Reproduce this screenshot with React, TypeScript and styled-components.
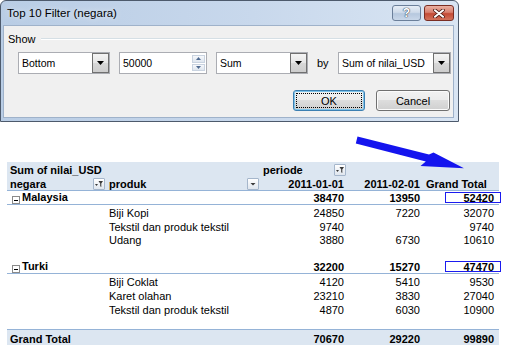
import React from 'react';
import styled, { createGlobalStyle } from 'styled-components';

const GlobalStyle = createGlobalStyle`
  html, body {
    margin: 0;
    padding: 0;
    background: #ffffff;
  }
  body {
    width: 505px;
    height: 353px;
    overflow: hidden;
    font-family: "Liberation Sans", Arial, sans-serif;
  }
`;

const Page = styled.div`
  position: relative;
  width: 505px;
  height: 353px;
`;

/* ---------- dialog ---------- */

const Window = styled.div`
  width: 459px;
  height: 122px;
  box-sizing: border-box;
  border: 1px solid #4d5a6c;
  border-radius: 6px 6px 0 0;
  background: linear-gradient(90deg, #b9cde5 0%, #c8d8ec 55%, #d9e5f3 100%);
  padding: 0 4px 3px 2px;
  display: flex;
  flex-direction: column;
`;

const TitleBar = styled.div`
  height: 24px;
  display: flex;
  align-items: flex-start;
`;

const Title = styled.span`
  align-self: center;
  flex: 1;
  padding-left: 4px;
  font-size: 11.5px;
  color: #000;
  text-shadow: 0 0 6px rgba(255, 255, 255, 0.8);
`;

const CaptionButtons = styled.div`
  display: flex;
  gap: 3px;
  padding-top: 4px;
`;

const CaptionButton = styled.span<{ $close?: boolean }>`
  width: ${p => (p.$close ? 30 : 29)}px;
  height: 16px;
  box-sizing: border-box;
  border: 1px solid ${p => (p.$close ? '#7a2d23' : '#6b7f9a')};
  border-radius: 3px;
  background: ${p =>
    p.$close
      ? 'linear-gradient(#eab0a2, #d8806f 45%, #c44a35 55%, #d2735c)'
      : 'linear-gradient(#e6edf6, #cfdbea 45%, #b6c8de 55%, #c9d7e9)'};
  display: flex;
  align-items: center;
  justify-content: center;
  font-size: 12px;
  font-weight: bold;
  color: #fff;
  text-shadow: 0 0 1px #3c4a5e, 0 0 1px #3c4a5e, 0 0 1px #3c4a5e;
`;

const DialogBody = styled.div`
  flex: 1;
  box-sizing: border-box;
  border: 1px solid #9fb2ca;
  background: #f0f0f0;
  display: flex;
  flex-direction: column;
`;

const GroupHeader = styled.div`
  margin-top: 6px;
  height: 14px;
  display: flex;
  align-items: center;
  padding-left: 4px;
  padding-right: 2px;
  font-size: 11px;
  color: #000;
`;

const GroupLine = styled.span`
  flex: 1;
  margin-left: 5px;
  height: 1px;
  background: #d5dfe5;
  border-bottom: 1px solid #ffffff;
`;

const ControlRow = styled.div`
  margin-top: 6px;
  padding-left: 14px;
  display: flex;
  align-items: center;
  gap: 9px;
`;

const Combo = styled.div<{ $w: number }>`
  width: ${p => p.$w}px;
  height: 22px;
  box-sizing: border-box;
  border: 1px solid #abadb3;
  background: #fff;
  display: flex;
  align-items: stretch;
`;

const ComboText = styled.span`
  flex: 1;
  padding-left: 3px;
  display: flex;
  align-items: center;
  font-size: 10.5px;
  color: #000;
  white-space: nowrap;
`;

const DropButton = styled.span`
  width: 17px;
  box-sizing: border-box;
  border: 1px solid #707070;
  background: linear-gradient(#f4f4f4, #e6e6e6 50%, #d8d8d8 50%, #cdcdcd);
  display: flex;
  align-items: center;
  justify-content: center;
`;

const SpinBox = styled.span`
  width: 13px;
  margin: 2px 1px 2px 0;
  display: flex;
  flex-direction: column;
  gap: 1px;
`;

const SpinHalf = styled.span`
  flex: 1;
  box-sizing: border-box;
  border: 1px solid #c9d3e0;
  background: linear-gradient(#f6f8fb, #dfe6ef);
  display: flex;
  align-items: center;
  justify-content: center;
`;

const ByLabel = styled.span`
  width: 12px;
  font-size: 11px;
  color: #000;
`;

const ButtonRow = styled.div`
  margin-top: 16px;
  padding-right: 3px;
  display: flex;
  justify-content: flex-end;
  gap: 11px;
`;

const DialogButton = styled.button<{ $w: number; $default?: boolean }>`
  width: ${p => p.$w}px;
  height: 21px;
  box-sizing: border-box;
  padding: 0;
  border: 1px solid ${p => (p.$default ? '#3c7fb1' : '#707070')};
  border-radius: 3px;
  background: linear-gradient(#f2f2f2, #ebebeb 50%, #dddddd 50%, #cfcfcf);
  box-shadow: ${p => (p.$default ? 'inset 0 0 0 1px #7ec4ea' : 'inset 0 0 0 1px #fbfbfb')};
  outline: ${p => (p.$default ? '1px dotted #000' : 'none')};
  outline-offset: -4px;
  font-family: "Liberation Sans", Arial, sans-serif;
  font-size: 11px;
  color: #000;
`;

/* ---------- pivot table ---------- */

const Pivot = styled.table`
  margin: 40px 0 0 7px;
  border-collapse: collapse;
  table-layout: fixed;
  width: 492px;
  font-family: "Liberation Sans", Arial, sans-serif;
  font-size: 11px;
  color: #000;
`;

const Col = styled.col<{ $w: number }>`
  width: ${p => p.$w}px;
`;

const Row = styled.tr<{ $h: number; $band?: boolean; $line?: 'top' | 'bottom' }>`
  height: ${p => p.$h}px;
  background: ${p => (p.$band ? '#dce6f1' : 'transparent')};

  & > td {
    border-top: ${p => (p.$line === 'top' ? '1px solid #95b3d7' : 'none')};
    border-bottom: ${p => (p.$line === 'bottom' ? '1px solid #95b3d7' : 'none')};
  }
`;

const Cell = styled.td<{ $right?: boolean; $bold?: boolean; $pr?: number }>`
  padding: 0 ${p => p.$pr ?? 3}px 0 3px;
  line-height: 12px;
  text-align: ${p => (p.$right ? 'right' : 'left')};
  font-weight: ${p => (p.$bold ? 'bold' : 'normal')};
  white-space: nowrap;
  overflow: visible;
  vertical-align: bottom;
`;

const HeadInner = styled.div`
  display: flex;
  align-items: center;
  justify-content: space-between;
`;

const FilterButton = styled.span`
  width: 12px;
  height: 12px;
  box-sizing: border-box;
  border: 1px solid #a5b6cb;
  border-radius: 1px;
  background: linear-gradient(#ffffff, #dfe6ee);
  display: flex;
  align-items: center;
  justify-content: center;
  margin-right: -2px;
`;

const Toggle = styled.span`
  display: inline-flex;
  width: 8px;
  height: 8px;
  box-sizing: border-box;
  border: 1px solid #8a8a8a;
  background: #fff;
  align-items: center;
  justify-content: center;
  margin: 0 2px 0 2px;
  vertical-align: 0;

  &::before {
    content: '';
    width: 4px;
    height: 1px;
    background: #000;
  }
`;

const Value = styled.span`
  position: relative;
  display: inline-block;
`;

const Marked = styled.span`
  position: absolute;
  left: -18px;
  right: -7px;
  top: 0;
  bottom: 1px;
  border: 1px solid #1b1bef;
`;

const Arrow = styled.svg`
  position: absolute;
  left: 350px;
  top: 130px;
  width: 120px;
  height: 45px;
  pointer-events: none;
`;

const Triangle = () => (
  <svg width="7" height="4" viewBox="0 0 7 4">
    <polygon points="0,0 7,0 3.5,4" fill="#000" />
  </svg>
);

const FunnelIcon = () => (
  <svg width="8" height="8" viewBox="0 0 8 8">
    <polygon points="0,4 3,4 1.5,6" fill="#3a3a3a" />
    <polygon points="3.5,1 8,1 6.3,3.6 6.3,7 5.2,6.2 5.2,3.6" fill="#3a3a3a" />
  </svg>
);

const DropIcon = () => (
  <svg width="6" height="4" viewBox="0 0 6 4">
    <polygon points="0.5,1 5.5,1 3,3.5" fill="#3a3a3a" />
  </svg>
);

type Line = {
  name: string;
  vals?: (number | null)[];
  group?: boolean;
  marked?: boolean;
  h: number;
};

const lines: Line[] = [
  { name: 'Malaysia', vals: [38470, 13950, 52420], group: true, marked: true, h: 14 },
  { name: 'Biji Kopi', vals: [24850, 7220, 32070], h: 14 },
  { name: 'Tekstil dan produk tekstil', vals: [9740, null, 9740], h: 14 },
  { name: 'Udang', vals: [3880, 6730, 10610], h: 13 },
  { name: '', h: 14 },
  { name: 'Turki', vals: [32200, 15270, 47470], group: true, marked: true, h: 13 },
  { name: 'Biji Coklat', vals: [4120, 5410, 9530], h: 14 },
  { name: 'Karet olahan', vals: [23210, 3830, 27040], h: 14 },
  { name: 'Tekstil dan produk tekstil', vals: [4870, 6030, 10900], h: 14 },
  { name: '', h: 14 },
];

function App() {
  return (
    <Page>
      <GlobalStyle />
      <Window>
        <TitleBar>
          <Title>Top 10 Filter (negara)</Title>
          <CaptionButtons>
            <CaptionButton>?</CaptionButton>
            <CaptionButton $close>
              <svg width="12" height="9" viewBox="0 0 12 9">
                <path d="M2 1.2 L10 7.8 M10 1.2 L2 7.8" stroke="#4b1b14" strokeWidth="3.6" strokeLinecap="round" />
                <path d="M2 1.2 L10 7.8 M10 1.2 L2 7.8" stroke="#ffffff" strokeWidth="2" strokeLinecap="round" />
              </svg>
            </CaptionButton>
          </CaptionButtons>
        </TitleBar>
        <DialogBody>
          <GroupHeader>
            Show
            <GroupLine />
          </GroupHeader>
          <ControlRow>
            <Combo $w={92}>
              <ComboText>Bottom</ComboText>
              <DropButton>
                <Triangle />
              </DropButton>
            </Combo>
            <Combo $w={88}>
              <ComboText>50000</ComboText>
              <SpinBox>
                <SpinHalf>
                  <svg width="5" height="3" viewBox="0 0 5 3">
                    <polygon points="2.5,0 5,3 0,3" fill="#4f6a90" />
                  </svg>
                </SpinHalf>
                <SpinHalf>
                  <svg width="5" height="3" viewBox="0 0 5 3">
                    <polygon points="0,0 5,0 2.5,3" fill="#4f6a90" />
                  </svg>
                </SpinHalf>
              </SpinBox>
            </Combo>
            <Combo $w={92}>
              <ComboText>Sum</ComboText>
              <DropButton>
                <Triangle />
              </DropButton>
            </Combo>
            <ByLabel>by</ByLabel>
            <Combo $w={113}>
              <ComboText>Sum of nilai_USD</ComboText>
              <DropButton>
                <Triangle />
              </DropButton>
            </Combo>
          </ControlRow>
          <ButtonRow>
            <DialogButton $w={72} $default>OK</DialogButton>
            <DialogButton $w={74}>Cancel</DialogButton>
          </ButtonRow>
        </DialogBody>
      </Window>

      <Arrow viewBox="350 130 120 45">
        <polygon
          points="357.5,136.4 429,154.6 433.5,152.4 464,168.3 420.5,166 425.8,161.6 355.8,143.4"
          fill="#1414ee"
        />
      </Arrow>

      <Pivot>
        <colgroup>
          <Col $w={99} />
          <Col $w={154} />
          <Col $w={87} />
          <Col $w={76} />
          <Col $w={76} />
        </colgroup>
        <tbody>
          <Row $h={14} $band>
            <Cell $bold>Sum of nilai_USD</Cell>
            <Cell />
            <Cell $bold>
              <HeadInner>
                periode
                <FilterButton>
                  <FunnelIcon />
                </FilterButton>
              </HeadInner>
            </Cell>
            <Cell />
            <Cell />
          </Row>
          <Row $h={14} $band $line="bottom">
            <Cell $bold>
              <HeadInner>
                negara
                <FilterButton>
                  <FunnelIcon />
                </FilterButton>
              </HeadInner>
            </Cell>
            <Cell $bold>
              <HeadInner>
                produk
                <FilterButton>
                  <DropIcon />
                </FilterButton>
              </HeadInner>
            </Cell>
            <Cell $bold $right>2011-01-01</Cell>
            <Cell $bold $right>2011-02-01</Cell>
            <Cell $bold>Grand Total</Cell>
          </Row>
          {lines.map((l, i) => (
            <Row key={i} $h={l.h} $line={l.group ? 'bottom' : undefined}>
              <Cell $bold={l.group}>
                {l.group && <Toggle />}
                {l.group ? l.name : ''}
              </Cell>
              <Cell>{l.group ? '' : l.name}</Cell>
              <Cell $right $bold={l.group}>{l.vals?.[0] ?? ''}</Cell>
              <Cell $right $bold={l.group}>{l.vals?.[1] ?? ''}</Cell>
              <Cell $right $bold={l.group} $pr={5}>
                {l.vals && (
                  <Value>
                    {l.marked && <Marked />}
                    {l.vals[2]}
                  </Value>
                )}
              </Cell>
            </Row>
          ))}
          <Row $h={15} $band $line="top">
            <Cell $bold>Grand Total</Cell>
            <Cell />
            <Cell $right $bold>70670</Cell>
            <Cell $right $bold>29220</Cell>
            <Cell $right $bold $pr={5}>99890</Cell>
          </Row>
        </tbody>
      </Pivot>
    </Page>
  );
}

export default App;
